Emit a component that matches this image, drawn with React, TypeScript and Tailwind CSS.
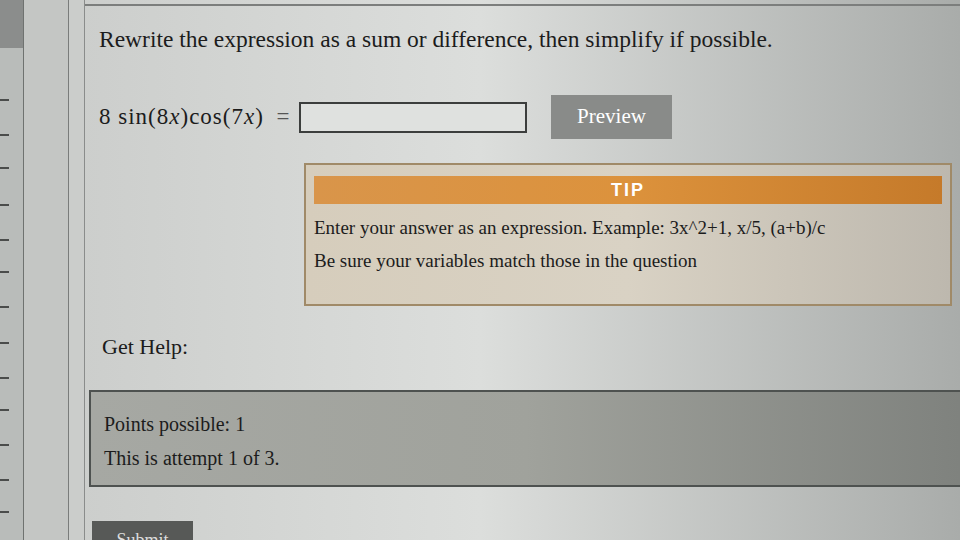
import React from 'react';

const ticks = [100, 135, 168, 205, 240, 272, 307, 343, 378, 410, 445, 480, 512];

const serif = { fontFamily: '"Liberation Serif", "DejaVu Serif", serif' };

export default function App() {
  return (
    <div
      className="w-[960px] h-[540px] overflow-hidden flex bg-gradient-to-r from-[#c9cbc9] via-[#dcdedc] to-[#a9acaa] text-[#1c1c1c]"
      style={serif}
    >
      {/* left rail */}
      <div className="w-[24px] shrink-0 flex flex-col bg-[#b9bcba] border-r border-[#6f7270]">
        <div className="h-[48px] shrink-0 bg-[#8b8d8c]" />
        <div className="relative flex-1">
          {ticks.map((t) => (
            <div key={t} className="absolute left-0 w-[9px] h-[2px] bg-[#4a4c4b]" style={{ top: t - 49 }} />
          ))}
        </div>
      </div>
      <div className="w-[45px] shrink-0 bg-[#c4c6c4] border-r border-[#7a7c7b]" />
      <div className="w-[16px] shrink-0 bg-[#cbcdcb] border-r border-[#8a8c8b]" />

      {/* main */}
      <div className="flex-1 flex flex-col mt-[4px] border-t-2 border-[#7c7e7d]">
        <div className="shrink-0 pl-[14px] pt-[20px] text-[23.5px] leading-[26px] whitespace-nowrap">
          Rewrite the expression as a sum or difference, then simplify if possible.
        </div>

        <div className="shrink-0 flex items-center pl-[14px] mt-[43px] h-[44px]">
          <div className="text-[23px] leading-[26px] w-[200px] whitespace-nowrap tracking-[1px]">
            8 sin(8<i>x</i>)cos(7<i>x</i>) <span className="ml-[6px] text-[#555]">=</span>
          </div>
          <div className="w-[228px] h-[31px] border-2 border-[#3c3e3d] bg-[#dfe1df]" />
          <div className="ml-[24px] w-[121px] h-[44px] bg-[#898b89] text-white text-[21px] flex items-center justify-center">
            Preview
          </div>
        </div>

        <div className="shrink-0 ml-[219px] mr-[8px] mt-[24px] h-[143px] border-2 border-[#a08a68] bg-gradient-to-r from-[#d6cdbc] via-[#d9d2c4] to-[#bdb8ae] px-[8px] pt-[11px]">
          <div className="h-[28px] bg-gradient-to-r from-[#d9954a] via-[#dc923c] to-[#c57a2a] flex items-center justify-center text-white font-bold text-[18px] tracking-[2px]" style={{ fontFamily: '"Liberation Sans", Arial, sans-serif' }}>
            TIP
          </div>
          <div className="mt-[13px] text-[19px] leading-[22px] whitespace-nowrap">
            Enter your answer as an expression. Example: 3x^2+1, x/5, (a+b)/c
          </div>
          <div className="mt-[11px] text-[19px] leading-[22px] whitespace-nowrap">
            Be sure your variables match those in the question
          </div>
        </div>

        <div className="shrink-0 pl-[17px] mt-[28px] text-[22px] leading-[26px]">Get Help:</div>

        <div className="shrink-0 ml-[4px] mt-[30px] h-[97px] border-y-2 border-l-2 border-[#4e5250] bg-gradient-to-r from-[#a6a8a3] via-[#a0a29c] to-[#7f827e] pl-[13px] pt-[20px] text-[20px] leading-[24px]">
          <div>Points possible: 1</div>
          <div className="mt-[10px]">This is attempt 1 of 3.</div>
        </div>

        <div className="shrink-0 ml-[7px] mt-[34px] w-[101px] h-[30px] bg-[#575957] text-[#ddd] text-[18px] flex items-start justify-center pt-[6px]">
          Submit
        </div>
      </div>
    </div>
  );
}
